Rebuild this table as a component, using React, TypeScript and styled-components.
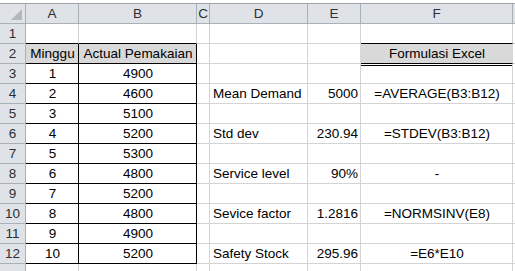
import React from 'react';
import styled, { createGlobalStyle } from 'styled-components';

type Align = 'left' | 'center' | 'right';

type CellSpec = {
  text?: string;
  align?: Align;
  fill?: string;
  right?: string;
  bottom?: string;
  doubleTop?: boolean;
};

const GRID = '#d4d4d4';
const INK = '#000';
const HEAD_FILL = '#d9d9d9';

const COLUMNS = ['A', 'B', 'C', 'D', 'E', 'F', ''];

const demand = ['4900', '4600', '5100', '5200', '5300', '4800', '5200', '4800', '4900', '5200'];

const summary: Record<number, [string, string, string]> = {
  4: ['Mean Demand', '5000', '=AVERAGE(B3:B12)'],
  6: ['Std dev', '230.94', '=STDEV(B3:B12)'],
  8: ['Service level', '90%', '-'],
  10: ['Sevice factor', '1.2816', '=NORMSINV(E8)'],
  12: ['Safety Stock', '295.96', '=E6*E10'],
};

const buildRow = (n: number): CellSpec[] => {
  const boxed = n >= 2 && n <= 12;
  const edge = boxed ? INK : GRID;
  const a: CellSpec = { align: 'center', right: edge, bottom: n <= 12 ? INK : GRID };
  const b: CellSpec = { align: 'center', right: edge, bottom: n <= 12 ? INK : GRID };
  const d: CellSpec = { align: 'left' };
  const e: CellSpec = { align: 'right' };
  const f: CellSpec = { align: 'center' };

  if (n === 2) {
    a.text = 'Minggu';
    a.fill = HEAD_FILL;
    b.text = 'Actual Pemakaian';
    b.fill = HEAD_FILL;
    e.right = HEAD_FILL;
    f.text = 'Formulasi Excel';
    f.fill = HEAD_FILL;
    f.right = HEAD_FILL;
    f.bottom = INK;
  }
  if (n === 1) f.bottom = INK;
  if (n === 3) f.doubleTop = true;
  if (n >= 3 && n <= 12) {
    a.text = String(n - 2);
    b.text = demand[n - 3];
  }
  const s = summary[n];
  if (s) {
    d.text = s[0];
    e.text = s[1];
    f.text = s[2];
  }
  return [a, b, {}, d, e, f, {}];
};

// row 13 only peeks in at the bottom edge, so its number stays hidden
const ROWS = Array.from({ length: 13 }, (_, i) => i + 1);

export default function App() {
  return (
    <>
      <GlobalStyle />
      <Sheet>
        <Corner>
          <svg width="11" height="11" viewBox="0 0 11 11">
            <polygon points="11,0 11,11 0,11" fill="#b4b8bd" />
          </svg>
        </Corner>
        {COLUMNS.map((c, i) => (
          <ColHead key={`col-${i}`}>{c}</ColHead>
        ))}
        {ROWS.map((n) => (
          <React.Fragment key={`row-${n}`}>
            <RowHead>{n <= 12 ? n : ''}</RowHead>
            {buildRow(n).map((cell, i) => (
              <Cell
                key={`c-${n}-${i}`}
                $align={cell.align}
                $fill={cell.fill}
                $right={cell.right}
                $bottom={cell.bottom}
                $doubleTop={cell.doubleTop}
              >
                {cell.text}
              </Cell>
            ))}
          </React.Fragment>
        ))}
      </Sheet>
    </>
  );
}

const GlobalStyle = createGlobalStyle`
  html, body {
    margin: 0;
    padding: 0;
    background: #fff;
    overflow: hidden;
  }
  body {
    font-family: 'Liberation Sans', Arial, sans-serif;
    font-size: 13.5px;
  }
`;

const Sheet = styled.div`
  display: grid;
  grid-template-columns: 26px 53px 118px 13px 98px 53px 152px 1fr;
  grid-template-rows: 20px;
  grid-auto-rows: 20px;
  width: 515px;
  height: 268px;
  margin-top: 3px;
  border-top: 1px solid #9ea4ab;
  overflow: hidden;
  box-sizing: border-box;
  color: #000;
`;

const HeadBase = styled.div`
  box-sizing: border-box;
  background: #dfe3e8;
  color: #2b2f33;
  border-right: 1px solid #a9b0b8;
  border-bottom: 1px solid #a9b0b8;
  display: flex;
  align-items: flex-end;
  justify-content: center;
  line-height: 14px;
  padding-bottom: 2px;
  white-space: nowrap;
  overflow: hidden;
`;

const Corner = styled(HeadBase)`
  align-items: flex-end;
  justify-content: flex-end;
  padding: 0 3px 3px 0;
`;

const ColHead = styled(HeadBase)``;

const RowHead = styled(HeadBase)``;

const Cell = styled.div<{
  $align?: Align;
  $fill?: string;
  $right?: string;
  $bottom?: string;
  $doubleTop?: boolean;
}>`
  box-sizing: border-box;
  display: flex;
  align-items: flex-end;
  justify-content: ${(p) =>
    p.$align === 'right' ? 'flex-end' : p.$align === 'left' ? 'flex-start' : 'center'};
  padding: 0 2px 2px 3px;
  line-height: 14px;
  white-space: nowrap;
  border-right: 1px solid ${(p) => p.$right ?? GRID};
  border-bottom: 1px solid ${(p) => p.$bottom ?? GRID};
  background: ${(p) =>
    p.$doubleTop
      ? `linear-gradient(#fff 0 1px, ${INK} 1px 2px, #fff 2px)`
      : p.$fill ?? '#fff'};
`;
